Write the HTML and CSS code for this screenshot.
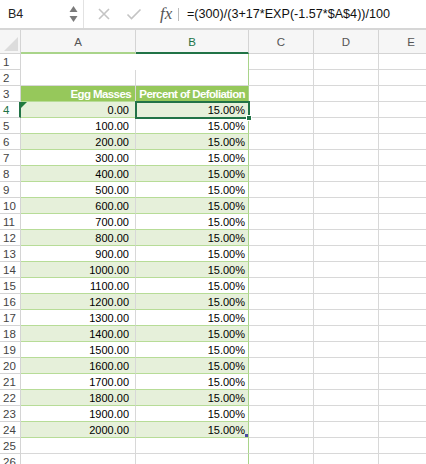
FILE: index.html
```html
<!DOCTYPE html>
<html>
<head>
<meta charset="utf-8">
<link rel="stylesheet" href="styles.css">
</head>
<body>
<div class="app">
  <div class="fbar">
    <div class="namebox">
      <span class="ref">B4</span>
      <span class="stepper">
        <svg width="9" height="18" viewBox="0 0 9 18"><path d="M4.5 1 L8.5 7 L0.5 7 Z" fill="#7a7a7a"/><path d="M0.5 11 L8.5 11 L4.5 17 Z" fill="#7a7a7a"/></svg>
      </span>
    </div>
    <div class="fbtns">
      <svg class="ic ic-x" width="14" height="12" viewBox="0 0 14 12"><path d="M2 1 L12 11 M12 1 L2 11" stroke="#c4c4c4" stroke-width="1.6" fill="none"/></svg>
      <svg class="ic ic-ok" width="16" height="12" viewBox="0 0 16 12"><path d="M1.5 6.5 L5.5 10.5 L14.5 1.5" stroke="#c4c4c4" stroke-width="1.6" fill="none"/></svg>
      <span class="fx">fx</span>
      <span class="vsep"></span>
    </div>
    <div class="formula">=(300)/(3+17*EXP(-1.57*$A$4))/100</div>
  </div>
  <div class="sheet">
    <div class="corner"><svg width="14" height="14" viewBox="0 0 14 14"><path d="M14 0 L14 14 L0 14 Z" fill="#dcdcdc"/></svg></div>
    <div class="ch cha">A</div>
    <div class="ch chb">B</div>
    <div class="ch">C</div>
    <div class="ch">D</div>
    <div class="ch">E</div>

    <div class="rh">1</div><div class="c merged"></div><div class="c"></div><div class="c"></div><div class="c"></div>
    <div class="rh">2</div><div class="c"></div><div class="c cb"></div><div class="c"></div><div class="c"></div><div class="c"></div>
    <div class="rh">3</div><div class="c hd">Egg Masses</div><div class="c hd cb">Percent of Defoliation</div><div class="c"></div><div class="c"></div><div class="c"></div>
    <div class="rh sel">4</div><div class="c t ta band"><span class="tri"></span>0.00</div><div class="c t cb band active">15.00%<span class="handle"></span></div><div class="c"></div><div class="c"></div><div class="c"></div>
    <div class="rh">5</div><div class="c t ta">100.00</div><div class="c t cb">15.00%</div><div class="c"></div><div class="c"></div><div class="c"></div>
    <div class="rh">6</div><div class="c t ta band">200.00</div><div class="c t cb band">15.00%</div><div class="c"></div><div class="c"></div><div class="c"></div>
    <div class="rh">7</div><div class="c t ta">300.00</div><div class="c t cb">15.00%</div><div class="c"></div><div class="c"></div><div class="c"></div>
    <div class="rh">8</div><div class="c t ta band">400.00</div><div class="c t cb band">15.00%</div><div class="c"></div><div class="c"></div><div class="c"></div>
    <div class="rh">9</div><div class="c t ta">500.00</div><div class="c t cb">15.00%</div><div class="c"></div><div class="c"></div><div class="c"></div>
    <div class="rh">10</div><div class="c t ta band">600.00</div><div class="c t cb band">15.00%</div><div class="c"></div><div class="c"></div><div class="c"></div>
    <div class="rh">11</div><div class="c t ta">700.00</div><div class="c t cb">15.00%</div><div class="c"></div><div class="c"></div><div class="c"></div>
    <div class="rh">12</div><div class="c t ta band">800.00</div><div class="c t cb band">15.00%</div><div class="c"></div><div class="c"></div><div class="c"></div>
    <div class="rh">13</div><div class="c t ta">900.00</div><div class="c t cb">15.00%</div><div class="c"></div><div class="c"></div><div class="c"></div>
    <div class="rh">14</div><div class="c t ta band">1000.00</div><div class="c t cb band">15.00%</div><div class="c"></div><div class="c"></div><div class="c"></div>
    <div class="rh">15</div><div class="c t ta">1100.00</div><div class="c t cb">15.00%</div><div class="c"></div><div class="c"></div><div class="c"></div>
    <div class="rh">16</div><div class="c t ta band">1200.00</div><div class="c t cb band">15.00%</div><div class="c"></div><div class="c"></div><div class="c"></div>
    <div class="rh">17</div><div class="c t ta">1300.00</div><div class="c t cb">15.00%</div><div class="c"></div><div class="c"></div><div class="c"></div>
    <div class="rh">18</div><div class="c t ta band">1400.00</div><div class="c t cb band">15.00%</div><div class="c"></div><div class="c"></div><div class="c"></div>
    <div class="rh">19</div><div class="c t ta">1500.00</div><div class="c t cb">15.00%</div><div class="c"></div><div class="c"></div><div class="c"></div>
    <div class="rh">20</div><div class="c t ta band">1600.00</div><div class="c t cb band">15.00%</div><div class="c"></div><div class="c"></div><div class="c"></div>
    <div class="rh">21</div><div class="c t ta">1700.00</div><div class="c t cb">15.00%</div><div class="c"></div><div class="c"></div><div class="c"></div>
    <div class="rh">22</div><div class="c t ta band">1800.00</div><div class="c t cb band">15.00%</div><div class="c"></div><div class="c"></div><div class="c"></div>
    <div class="rh">23</div><div class="c t ta">1900.00</div><div class="c t cb">15.00%</div><div class="c"></div><div class="c"></div><div class="c"></div>
    <div class="rh">24</div><div class="c t ta band">2000.00</div><div class="c t cb band">15.00%<span class="resize"></span></div><div class="c"></div><div class="c"></div><div class="c"></div>
    <div class="rh">25</div><div class="c"></div><div class="c cb"></div><div class="c"></div><div class="c"></div><div class="c"></div>
    <div class="rh">26</div><div class="c"></div><div class="c cb"></div><div class="c"></div><div class="c"></div><div class="c"></div>
  </div>
</div>
</body>
</html>
```
FILE: styles.css
```css
* { box-sizing: border-box; }
html, body { margin: 0; padding: 0; background: #ffffff; }
body { font-family: "Liberation Sans", Arial, sans-serif; color: #000; overflow: hidden; }
.app { width: 426px; height: 464px; overflow: hidden; position: relative; }

.fbar {
  height: 30px;
  display: flex;
  align-items: stretch;
  background: #fff;
  border-bottom: 2px solid #d6d6d6;
}
.namebox {
  width: 84px;
  display: flex;
  align-items: center;
  justify-content: space-between;
  padding: 0 5px 0 8px;
  border-right: 1px solid #e2e2e2;
}
.ref { font-size: 12.5px; color: #222; }
.stepper { display: flex; align-items: center; }
.fbtns {
  display: flex;
  align-items: center;
  padding-left: 13px;
  width: 102px;
}
.ic-x { margin-right: 15px; }
.ic-ok { margin-right: 18px; }
.fx {
  font-family: "Liberation Serif", "Times New Roman", serif;
  font-style: italic;
  font-size: 17px;
  color: #555;
  margin-right: 6px;
}
.vsep { width: 1px; height: 13px; background: #bdbdbd; }
.formula {
  font-size: 12.6px;
  color: #111;
  display: flex;
  align-items: center;
  padding-left: 1px;
  white-space: nowrap;
}

.sheet {
  display: grid;
  grid-template-columns: 21px 115px 113px 65px 65px 65px;
  grid-template-rows: 24px;
  grid-auto-rows: 16px;
  font-size: 11px;
}
.corner {
  background: #f6f6f6;
  border-right: 1px solid #d4d4d4;
  border-bottom: 1px solid #d4d4d4;
  display: flex;
  align-items: flex-end;
  justify-content: flex-end;
  padding: 0 2px 2px 0;
}
.ch {
  background: #f6f6f6;
  border-right: 1px solid #d4d4d4;
  border-bottom: 1px solid #d4d4d4;
  color: #555;
  font-size: 11.5px;
  display: flex;
  align-items: center;
  justify-content: center;
  padding-top: 1px;
}
.cha { border-bottom: 2px solid #a9d48a; }
.chb { border-bottom: 2px solid #217346; color: #217346; }
.rh {
  border-right: 1px solid #d4d4d4;
  border-bottom: 1px solid #d4d4d4;
  color: #444;
  font-size: 11.5px;
  padding-left: 3px;
  display: flex;
  align-items: center;
  background: #fff;
}
.rh.sel { color: #217346; border-right: 2px solid #217346; }
.c {
  border-right: 1px solid #d8d8d8;
  border-bottom: 1px solid #d8d8d8;
  display: flex;
  align-items: center;
  justify-content: flex-end;
  white-space: nowrap;
  position: relative;
}
.merged { grid-column: span 2; border-right: 1px solid #a9d48a; border-bottom: 0; }
.cb { border-right-color: #a9d48a; padding-right: 3px; }
.hd {
  background: #96c85b;
  color: #fff;
  font-weight: bold;
  font-size: 11.5px;
  letter-spacing: -0.6px;
  border-bottom-color: #b7dc97;
  padding-right: 4px;
}
.hd.cb { padding-right: 3px; }
.t { border-bottom-color: #b7dc97; }
.ta { padding-right: 6px; }
.band { background: #e6f0da; }
.active { outline: 2px solid #217346; outline-offset: -1px; z-index: 2; }
.handle {
  position: absolute;
  right: -4px;
  bottom: -4px;
  width: 6px;
  height: 6px;
  background: #217346;
  border: 1px solid #fff;
}
.tri {
  position: absolute;
  left: 0;
  top: 0;
  width: 0;
  height: 0;
  border-top: 6px solid #1e7a3c;
  border-right: 6px solid transparent;
}
.resize {
  position: absolute;
  right: 0;
  bottom: 0;
  width: 3px;
  height: 3px;
  background: #4b4ba3;
}
```
